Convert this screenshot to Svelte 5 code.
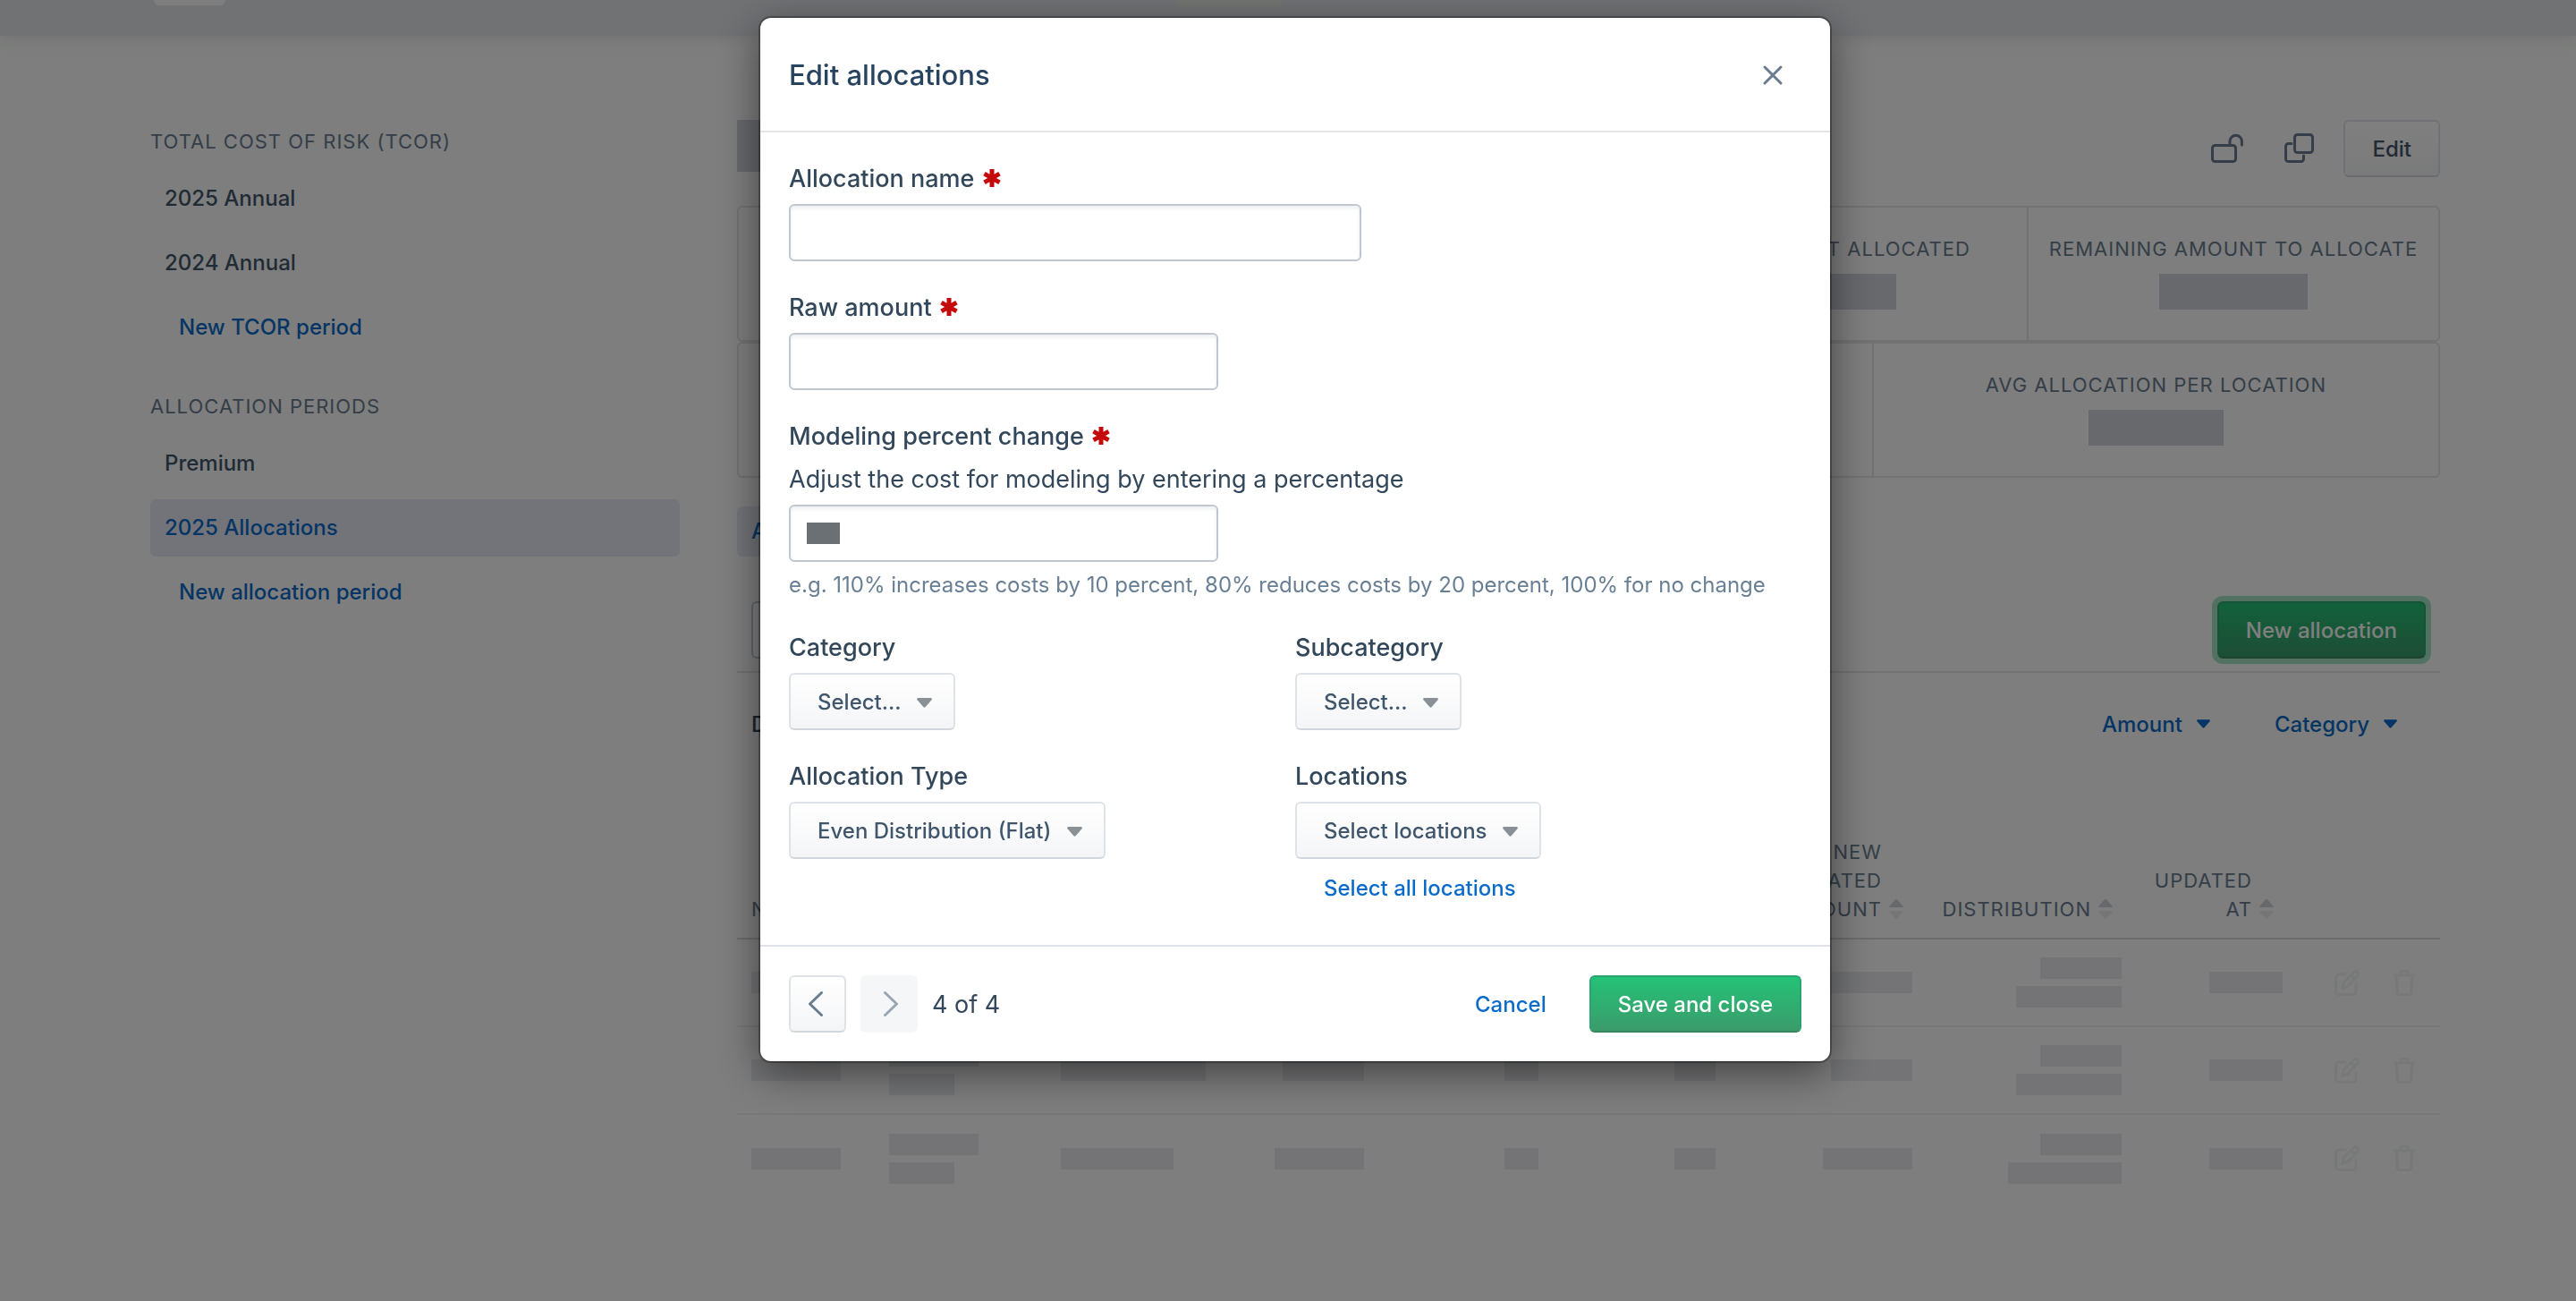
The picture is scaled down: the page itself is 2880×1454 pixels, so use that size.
<script lang="ts">
	let name = $state('');
	let rawAmount = $state('');
	let percent = $state('');
	let page = $state(4);

	const pageCount = 4;

	const columns = [154, 192, 210, 161, 195, 198, 220, 234, 180, 160];

	// widths of the placeholder bars, one list per cell
	const rows = [
		[[100], [100, 73], [162], [91], [38], [46], [91], [91, 118], [82]],
		[[100], [100, 73], [162], [91], [38], [46], [91], [91, 118], [82]],
		[[100], [100, 73], [126], [100], [38], [46], [100], [91, 127], [82]],
	];
</script>

<svelte:head>
	<title>Edit allocations</title>
</svelte:head>

{#snippet caret()}
	<svg class="caret" viewBox="0 0 17 11" aria-hidden="true">
		<path d="M1.500 0h14c1.200 0 1.800 1.400 1 2.300l-7 8c-.6.6-1.400.6-2 0l-7-8C-.3 1.400.3 0 1.500 0z" />
	</svg>
{/snippet}

{#snippet sort()}
	<svg class="sort" viewBox="0 0 16 24" aria-hidden="true">
		<path d="M1.500 10h13c1 0 1.400-1 .8-1.800l-6.300-7c-.6-.6-1.400-.6-2 0l-6.300 7C.1 9 .5 10 1.500 10z" />
		<path class="down" d="M1.500 14h13c1 0 1.400 1 .8 1.800l-6.300 7c-.6.6-1.400.6-2 0l-6.300-7C.1 15 .5 14 1.500 14z" />
	</svg>
{/snippet}

{#snippet required()}
	<svg class="required" viewBox="0 0 20 20" aria-hidden="true">
		<path d="M10 0v20M1.500 5.100l17 9.800M18.500 5.100l-17 9.800" />
	</svg>
{/snippet}

<div class="page">
	<header class="topbar">
		<div class="topbar-inner">
			<span class="chip"></span>
			<span class="chip wide"></span>
		</div>
	</header>

	<div class="layout">
		<aside>
			<h2>Total cost of risk (TCOR)</h2>
			<nav>
				<a href="#2025">2025 Annual</a>
				<a href="#2024">2024 Annual</a>
				<a class="new" href="#new-tcor">New TCOR period</a>
			</nav>
			<h2>Allocation periods</h2>
			<nav>
				<a href="#premium">Premium</a>
				<a class="active" href="#allocations">2025 Allocations</a>
				<a class="new" href="#new-period">New allocation period</a>
			</nav>
		</aside>

		<main>
			<div class="heading">
				<span class="block title"></span>
				<div class="actions">
					<button class="icon" aria-label="Unlock">
						<svg width="36" height="34" viewBox="0 0 36 34">
							<rect x="1.500" y="13.500" width="26" height="18" rx="3" />
							<path d="M21 13V9a6.700 6.700 0 0 1 13.400 0v4" />
						</svg>
					</button>
					<button class="icon" aria-label="Duplicate">
						<svg width="34" height="34" viewBox="0 0 34 34">
							<rect x="11.500" y="1.500" width="20" height="20" rx="3" />
							<path d="M8 11.500H4.500a3 3 0 0 0-3 3v14a3 3 0 0 0 3 3h14a3 3 0 0 0 3-3V25" />
						</svg>
					</button>
					<button class="btn">Edit</button>
				</div>
			</div>

			<div class="stats amounts">
				<div></div>
				<div>
					<h3>Total amount allocated</h3>
					<span class="block"></span>
				</div>
				<div>
					<h3>Remaining amount to allocate</h3>
					<span class="block"></span>
				</div>
			</div>
			<div class="stats">
				<div></div>
				<div></div>
				<div>
					<h3>Avg allocation per location</h3>
					<span class="block small"></span>
				</div>
			</div>

			<a class="tab" href="#allocations">Allocations</a>

			<div class="toolbar">
				<input class="search" type="search" aria-label="Search" />
				<button class="btn primary focused">New allocation</button>
			</div>

			<div class="filters">
				<span>Displaying</span>
				<div>
					<button>Amount {@render caret()}</button>
					<button>Category {@render caret()}</button>
				</div>
			</div>

			<table>
				<colgroup>
					{#each columns as width}
						<col style="width: {width / 19.04}%" />
					{/each}
				</colgroup>
				<thead>
					<tr>
						<th>Name</th>
						<th></th>
						<th></th>
						<th></th>
						<th></th>
						<th></th>
						<th><div>New<br />allocated<br />amount {@render sort()}</div></th>
						<th><div>Distribution {@render sort()}</div></th>
						<th><div>Updated<br />at {@render sort()}</div></th>
						<th></th>
					</tr>
				</thead>
				<tbody>
					{#each rows as row}
						<tr>
							{#each row as cell}
								<td>
									<div class="bars">
										{#each cell as width}
											<span style="width: {width}px"></span>
										{/each}
									</div>
								</td>
							{/each}
							<td>
								<div class="row-actions">
									<button aria-label="Edit row">
										<svg width="28" height="29" viewBox="0 0 28 29">
											<path d="M12 5H5a3.500 3.500 0 0 0-3.500 3.500V24A3.500 3.500 0 0 0 5 27.500h15.500A3.500 3.500 0 0 0 24 24v-7" />
											<path d="M8.500 20.500l2-7L21.500 2.700a2.900 2.900 0 0 1 4.200 4.200L15 18zM18.500 5.500l4.500 4.500" />
										</svg>
									</button>
									<button aria-label="Delete row">
										<svg width="24" height="29" viewBox="0 0 24 29">
											<path d="M0 6h24M3 6l1.500 19a2.500 2.500 0 0 0 2.500 2.500h10a2.500 2.500 0 0 0 2.500-2.500L21 6M7 6l1.500-4.500h7L17 6" />
										</svg>
									</button>
								</div>
							</td>
						</tr>
					{/each}
				</tbody>
			</table>
		</main>
	</div>
</div>

<div class="overlay">
	<div class="modal" role="dialog" aria-modal="true" aria-labelledby="modal-title">
		<div class="modal-header">
			<h1 id="modal-title">Edit allocations</h1>
			<button class="close" aria-label="Close">
				<svg width="22" height="22" viewBox="0 0 22 22">
					<path d="M2 2l18 18M20 2L2 20" />
				</svg>
			</button>
		</div>

		<form class="modal-body" id="allocation" onsubmit={(e) => e.preventDefault()}>
			<div class="field">
				<label for="name">Allocation name {@render required()}</label>
				<input id="name" class="long" type="text" bind:value={name} />
			</div>
			<div class="field">
				<label for="raw">Raw amount {@render required()}</label>
				<input id="raw" type="text" bind:value={rawAmount} />
			</div>
			<div class="field">
				<label for="percent">Modeling percent change {@render required()}</label>
				<p id="percent-help">Adjust the cost for modeling by entering a percentage</p>
				<div class="masked">
					<input id="percent" type="text" aria-describedby="percent-help" bind:value={percent} />
					<span></span>
				</div>
				<small>e.g. 110% increases costs by 10 percent, 80% reduces costs by 20 percent, 100% for no change</small>
			</div>

			<div class="columns">
				<div class="field">
					<label for="category">Category</label>
					<div class="select">
						<select id="category"><option>Select...</option></select>
						{@render caret()}
					</div>
				</div>
				<div class="field">
					<label for="subcategory">Subcategory</label>
					<div class="select">
						<select id="subcategory"><option>Select...</option></select>
						{@render caret()}
					</div>
				</div>
				<div class="field">
					<label for="type">Allocation Type</label>
					<div class="select">
						<select id="type"><option>Even Distribution (Flat)</option></select>
						{@render caret()}
					</div>
				</div>
				<div class="field">
					<label for="locations">Locations</label>
					<div class="select">
						<select id="locations"><option>Select locations</option></select>
						{@render caret()}
					</div>
					<button type="button" class="link">Select all locations</button>
				</div>
			</div>
		</form>

		<div class="modal-footer">
			<div class="pager">
				<button class="btn square" aria-label="Previous" onclick={() => page--} disabled={page <= 1}>
					<svg width="22" height="28" viewBox="0 0 22 28"><path d="M15.500 1.500L2.500 14l13 12.500" /></svg>
				</button>
				<button class="btn square" aria-label="Next" onclick={() => page++} disabled={page >= pageCount}>
					<svg width="22" height="28" viewBox="0 0 22 28"><path d="M6.500 1.500L19.500 14l-13 12.500" /></svg>
				</button>
				<span>{page} of {pageCount}</span>
			</div>
			<div class="submit">
				<button class="link">Cancel</button>
				<button class="btn primary" type="submit" form="allocation">Save and close</button>
			</div>
		</div>
	</div>
</div>

<style>
	:global(body) {
		background: #fafdfa;
		color: #33475b;
		font-family: Inter, "Liberation Sans", sans-serif;
		font-size: 24px;
		overflow: hidden;
	}

	* {
		box-sizing: border-box;
	}

	h1, h2, h3, p {
		margin: 0;
		font-weight: 400;
	}

	button, input, select {
		font: inherit;
		color: inherit;
	}

	button {
		border: none;
		background: none;
		padding: 0;
		cursor: pointer;
		white-space: nowrap;
	}

	a {
		text-decoration: none;
	}

	svg {
		fill: none;
		stroke: currentColor;
		stroke-width: 3;
		stroke-linecap: round;
		stroke-linejoin: round;
	}

	.caret {
		width: 17px;
		height: 11px;
		fill: currentColor;
		stroke: none;
	}

	/* page behind the dialog */
	.page {
		min-height: 100vh;
	}

	.topbar {
		height: 40px;
		background: #e2e4e9;
		box-shadow: 0 4px 16px rgba(40, 20, 40, 0.1);
	}

	.topbar-inner, .layout {
		display: flex;
		max-width: 2576px;
		margin: 0 auto;
		padding-left: 16px;
	}

	.chip {
		width: 80px;
		height: 6px;
		margin-left: 4px;
		border-radius: 0 0 6px 6px;
		background: #fcfcfc;
	}

	.chip.wide {
		width: 118px;
		height: 8px;
		margin-left: 1063px;
		background: #e6eae6;
	}

	.layout {
		gap: 64px;
		padding-top: 94px;
	}

	aside {
		flex: 0 0 592px;
		padding-top: 8px;
	}

	h2, h3, th {
		color: #6a7d90;
		font-size: 22px;
		font-weight: 400;
		line-height: 32px;
		letter-spacing: 1px;
		text-transform: uppercase;
	}

	nav {
		display: flex;
		flex-direction: column;
		gap: 8px;
		padding: 16px 0 40px;
	}

	nav a {
		padding: 0 16px;
		border-radius: 6px;
		color: #40566c;
		font-weight: 500;
		line-height: 64px;
	}

	nav a.new {
		padding-left: 32px;
		color: #0b6bcb;
	}

	nav a.active {
		background: #e5e9f3;
		color: #0b6bcb;
	}

	main {
		flex: 1;
		min-width: 0;
	}

	.heading, .actions, .toolbar, .filters, .filters div {
		display: flex;
		align-items: center;
		justify-content: space-between;
	}

	.heading {
		align-items: flex-start;
	}

	.block {
		display: block;
		width: 166px;
		height: 40px;
		background: #ced2db;
	}

	.block.title {
		width: 320px;
		height: 58px;
	}

	.block.small {
		width: 151px;
	}

	.actions {
		color: #6a7d90;
	}

	.icon {
		display: flex;
		margin-right: 46px;
	}

	.icon + .icon {
		margin-right: 32px;
	}

	.btn {
		height: 64px;
		padding: 0 30px;
		border: 2px solid #dfe3e8;
		border-bottom-color: #d2d7dd;
		border-radius: 6px;
		background: linear-gradient(#ffffff, #f4f5f7);
		color: #40566c;
		font-weight: 500;
	}

	.btn.primary {
		border-color: #2aa56f;
		border-bottom-color: #37865f;
		background: linear-gradient(#24c277, #3b9b6b);
		color: #ffffff;
	}

	.btn.focused {
		box-shadow: 0 0 0 6px #a4e2c7;
	}

	.stats {
		display: grid;
		grid-template-columns: 1fr 1fr 1fr;
		height: 152px;
		border: 2px solid #e2e5e3;
		border-radius: 6px;
	}

	.stats.amounts {
		grid-template-columns: 1fr 460px 460px;
		margin-top: 32px;
	}

	.stats > div {
		display: flex;
		flex-direction: column;
		align-items: center;
		gap: 12px;
		padding-top: 30px;
	}

	.stats > div + div {
		border-left: 2px solid #e2e5e3;
	}

	h3 {
		white-space: nowrap;
	}

	.tab {
		display: inline-block;
		margin-top: 32px;
		padding: 0 16px;
		border-radius: 6px;
		background: #e5e9f3;
		color: #0b6bcb;
		font-weight: 500;
		line-height: 56px;
	}

	.toolbar {
		margin-top: 50px;
		padding: 0 16px 14px;
		border-bottom: 2px solid #e2e5e3;
	}

	.search {
		width: 480px;
		height: 64px;
		border: 2px solid #c2c8d0;
		border-radius: 6px;
		background: #ffffff;
	}

	.filters {
		height: 114px;
		padding: 0 16px;
		font-weight: 500;
	}

	.filters div {
		gap: 8px;
	}

	.filters button {
		display: flex;
		align-items: center;
		gap: 16px;
		height: 64px;
		padding: 0 32px;
		color: #0b6bcb;
	}

	.filters .caret {
		width: 15px;
		height: 10px;
	}

	table {
		width: 100%;
		margin-top: 70px;
		border-collapse: collapse;
		table-layout: fixed;
	}

	th {
		padding: 0 26px 16px 16px;
		border-bottom: 2px solid #d7dad7;
		text-align: left;
		vertical-align: bottom;
		white-space: nowrap;
	}

	/* leaves room for the sort arrows beside the last line */
	th div {
		position: relative;
		padding-right: 24px;
		text-align: right;
	}

	.sort {
		position: absolute;
		right: 0;
		bottom: 4px;
		width: 16px;
		height: 24px;
		fill: #cfd3da;
		stroke: none;
	}

	.sort .down {
		fill: #eaedea;
	}

	td {
		height: 98px;
		padding: 0 16px;
		vertical-align: middle;
	}

	tr + tr td {
		border-top: 2px solid #edf0ed;
	}

	.bars {
		display: flex;
		flex-direction: column;
		gap: 8px;
	}

	.bars span {
		height: 24px;
		background: #e8e9ec;
	}

	td:nth-child(n + 4) .bars {
		align-items: flex-end;
	}

	.row-actions {
		display: flex;
		gap: 38px;
		padding-left: 26px;
		color: #eef0f0;
	}

	.row-actions button {
		display: flex;
	}

	/* dialog */
	.overlay {
		position: fixed;
		inset: 0;
		padding: 20px 0 20px 16px;
		background: rgba(0, 0, 0, 0.5);
	}

	.modal {
		max-width: 1196px;
		margin: 0 auto;
		border-radius: 12px;
		background: #ffffff;
		box-shadow: 0 0 0 2px rgba(0, 0, 0, 0.3), 0 12px 48px rgba(0, 0, 0, 0.5);
	}

	.modal-header {
		display: flex;
		align-items: center;
		justify-content: space-between;
		height: 128px;
		padding: 2px 53px 0 32px;
		border-bottom: 2px solid #e3e5e6;
	}

	h1 {
		color: #27435f;
		font-size: 31px;
		font-weight: 500;
		line-height: 48px;
	}

	.close {
		display: flex;
		color: #6a7d90;
	}

	.modal-body {
		display: flex;
		flex-direction: column;
		gap: 28px;
		padding: 28px 32px 32px;
	}

	.field {
		display: flex;
		flex-direction: column;
		align-items: flex-start;
	}

	label {
		margin-bottom: 4px;
		font-size: 27px;
		font-weight: 500;
		line-height: 48px;
	}

	.field p {
		font-size: 27px;
		line-height: 48px;
		margin: -4px 0 4px;
	}

	.required {
		width: 20px;
		height: 20px;
		margin-left: 2px;
		color: #c40a0a;
		stroke-width: 5;
		stroke-linecap: butt;
		vertical-align: baseline;
	}

	.field input {
		width: 480px;
		height: 64px;
		padding: 0 18px;
		border: 2px solid #c0c7cf;
		border-radius: 6px;
		background: #ffffff;
		box-shadow: inset 0 3px 4px #eef0f3;
	}

	.field input.long {
		width: 640px;
	}

	.masked, .select {
		position: relative;
	}

	.masked span {
		position: absolute;
		top: 20px;
		left: 20px;
		width: 37px;
		height: 24px;
		background: #6a7074;
	}

	.masked input, .select select {
		display: block;
	}

	small {
		margin-top: 8px;
		color: #697f94;
		font-size: 24px;
		line-height: 36px;
	}

	.columns {
		display: grid;
		grid-template-columns: 1fr 1fr;
		gap: 28px 0;
	}

	select {
		height: 64px;
		padding: 0 58px 0 30px;
		border: 2px solid #dfe3e8;
		border-bottom-color: #d2d7dd;
		border-radius: 6px;
		background: linear-gradient(#ffffff, #f4f5f7);
		color: #40566c;
		font-weight: 500;
		appearance: none;
	}

	.select .caret {
		position: absolute;
		top: 28px;
		right: 26px;
		color: #8a9196;
		pointer-events: none;
	}

	.link {
		height: 64px;
		padding: 0 32px;
		color: #0b6bcb;
		font-weight: 500;
	}

	.modal-footer {
		display: flex;
		align-items: center;
		justify-content: space-between;
		height: 130px;
		padding: 0 32px;
		border-top: 2px solid #dfe3e8;
	}

	.pager, .submit {
		display: flex;
		align-items: center;
		gap: 16px;
	}

	.pager span {
		font-size: 27px;
	}

	.square {
		display: flex;
		align-items: center;
		justify-content: center;
		width: 64px;
		padding: 0;
		color: #6a7d90;
	}

	.square:disabled {
		border-color: #f5f6f8;
		background: #f5f6f8;
		color: #98a6b4;
	}
</style>
